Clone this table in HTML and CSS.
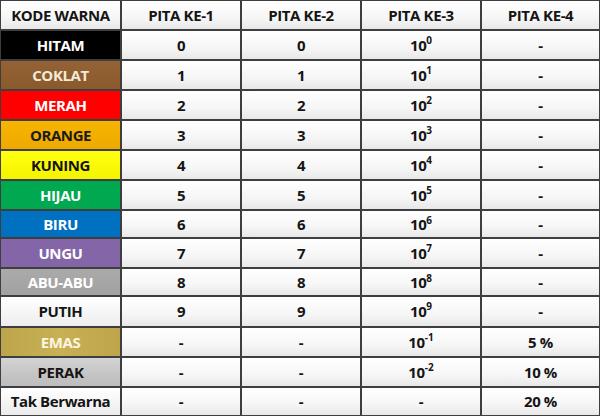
FILE: index.html
```html
<!DOCTYPE html>
<html>
<head>
<meta charset="utf-8">
<link rel="stylesheet" href="styles.css">
</head>
<body>
<div class="table">
  <div class="c">KODE WARNA</div><div class="c">PITA KE-1</div><div class="c">PITA KE-2</div><div class="c">PITA KE-3</div><div class="c">PITA KE-4</div>

  <div class="c k hitam">HITAM</div><div class="c">0</div><div class="c">0</div><div class="c">10<sup>0</sup></div><div class="c">-</div>
  <div class="c k coklat">COKLAT</div><div class="c">1</div><div class="c">1</div><div class="c">10<sup>1</sup></div><div class="c">-</div>
  <div class="c k merah">MERAH</div><div class="c">2</div><div class="c">2</div><div class="c">10<sup>2</sup></div><div class="c">-</div>
  <div class="c k orange">ORANGE</div><div class="c">3</div><div class="c">3</div><div class="c">10<sup>3</sup></div><div class="c">-</div>
  <div class="c k kuning">KUNING</div><div class="c">4</div><div class="c">4</div><div class="c">10<sup>4</sup></div><div class="c">-</div>
  <div class="c k hijau">HIJAU</div><div class="c">5</div><div class="c">5</div><div class="c">10<sup>5</sup></div><div class="c">-</div>
  <div class="c k biru">BIRU</div><div class="c">6</div><div class="c">6</div><div class="c">10<sup>6</sup></div><div class="c">-</div>
  <div class="c k ungu">UNGU</div><div class="c">7</div><div class="c">7</div><div class="c">10<sup>7</sup></div><div class="c">-</div>
  <div class="c k abu">ABU-ABU</div><div class="c">8</div><div class="c">8</div><div class="c">10<sup>8</sup></div><div class="c">-</div>
  <div class="c k putih">PUTIH</div><div class="c">9</div><div class="c">9</div><div class="c">10<sup>9</sup></div><div class="c">-</div>
  <div class="c k emas">EMAS</div><div class="c">-</div><div class="c">-</div><div class="c">10<sup>-1</sup></div><div class="c">5 %</div>
  <div class="c k perak">PERAK</div><div class="c">-</div><div class="c">-</div><div class="c">10<sup>-2</sup></div><div class="c">10 %</div>
  <div class="c k tak">Tak Berwarna</div><div class="c">-</div><div class="c">-</div><div class="c">-</div><div class="c">20 %</div>
</div>
</body>
</html>
```
FILE: styles.css
```css
html, body {
  margin: 0;
  padding: 0;
  background: #ffffff;
}

.table {
  width: 600px;
  box-sizing: border-box;
  display: grid;
  grid-template-columns: 119px 118px 118px 118px 117px;
  grid-template-rows: 28px 28px 28px 28px 28px 28px 28px 26px 28px 26px 29px 28px 28px 27px;
  gap: 2px;
  padding: 1px;
  background: #3e3e3e;
  font-family: "Open Sans", "Liberation Sans", sans-serif;
  font-weight: 700;
  font-size: 15px;
  letter-spacing: -0.4px;
  color: #151515;
}

.c {
  display: flex;
  align-items: center;
  justify-content: center;
  background: linear-gradient(to bottom, #ffffff 0%, #f6f6f6 60%, #e8e8e8 100%);
  white-space: nowrap;
  line-height: 1;
}

.c sup {
  font-size: 10px;
  letter-spacing: 0;
  position: relative;
  top: -2px;
  line-height: 1;
  vertical-align: baseline;
  align-self: flex-start;
  margin-top: 6px;
}

.hitam { background: #000000; color: #ffffff; }
.coklat { background: linear-gradient(#946235, #8a5a2c); color: #f3ead8; }
.merah { background: #fe0000; color: #ffffff; }
.orange { background: linear-gradient(#f7b500, #eea900); color: #1a1a1a; }
.kuning { background: linear-gradient(#ffff10, #f4f400); color: #141414; }
.hijau { background: #00a84f; color: #ffffff; }
.biru { background: #0070c0; color: #ffffff; }
.ungu { background: #8466a8; color: #ffffff; }
.abu { background: linear-gradient(#aaaaaa, #a2a2a2); color: #ffffff; }
.putih { background: linear-gradient(#ffffff, #ededed); color: #151515; }
.emas { background: linear-gradient(to right, #bca54a, #c8b055 50%, #bfa44b); color: #fbf6e0; }
.perak { background: linear-gradient(#d4d4d4, #c4c4c4 60%, #bdbdbd); color: #151515; }
.tak { background: linear-gradient(#ffffff, #ececec); color: #151515; }
```
